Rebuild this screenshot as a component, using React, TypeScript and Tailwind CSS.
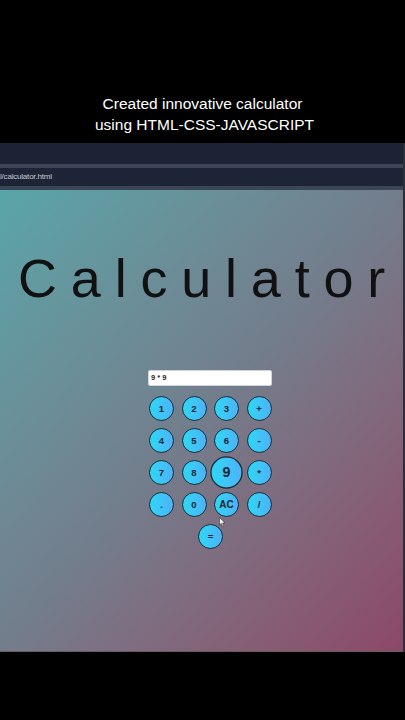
import React from 'react';

const keys = ['1', '2', '3', '+', '4', '5', '6', '-', '7', '8', '9', '*', '.', '0', 'AC', '/'];

const CalcKey: React.FC<{ label: string; hovered?: boolean }> = ({ label, hovered = false }) => {
  const base =
    "w-[25px] h-[25px] rounded-full border-[1.5px] border-[#14303d] bg-linear-to-r from-[#2bd7f5] to-[#4cb2f7] flex items-center justify-center font-bold text-[#172634] leading-none";
  const size = label === 'AC' ? 'text-[10px]' : 'text-[9.5px]';
  const hover = hovered ? 'scale-[1.3] text-[11px] z-10' : '';
  return <div className={`${base} ${size} ${hover}`}>{label}</div>;
};

export default function App() {
  return (
    <div className="w-[405px] h-[720px] bg-black flex flex-col overflow-hidden font-['Liberation_Sans',Arial,sans-serif]">
      {/* caption */}
      <div className="h-[143px] flex flex-col items-center pt-[93px] text-white text-[15.5px] leading-[21px]">
        <div>Created innovative calculator</div>
        <div className="pl-[4px]">using HTML-CSS-JAVASCRIPT</div>
      </div>

      {/* browser window */}
      <div className="flex">
        <div className="w-[403px] flex flex-col">
          <div className="h-[21px] bg-[#1b2335]" />
          <div className="h-[4px] bg-[#3c4658]" />
          <div className="h-[18px] bg-[#1c2436] flex items-center text-[8px] text-[#c3c9d3] tracking-[-0.2px]">
            l/calculator.html
          </div>
          <div className="h-[4px] bg-[#3a4556]" />

          {/* page */}
          <div className="h-[461px] bg-linear-to-br from-[#58a5a8] via-[#737d8c] to-[#8c4866] relative">
            <div className="pt-[61px] pl-[18px] text-[54px] leading-none tracking-[13.8px] text-[#111] whitespace-nowrap">
              Calculator
            </div>

            <div className="mt-[65px] ml-[148px] w-[124px] flex flex-col">
              <div className="h-[16px] bg-white rounded-[2px] border border-[#d0d4d8] flex items-center pl-[2px] text-[7.5px] font-bold text-[#222]">
                9 * 9
              </div>
              <div className="mt-[10px] ml-[1px] grid grid-cols-[repeat(4,25px)] gap-x-[7.5px] gap-y-[7px]">
                {keys.map((k) => (
                  <CalcKey key={k} label={k} hovered={k === '9'} />
                ))}
              </div>
              <div className="mt-[7px] flex justify-center pl-[1px]">
                <CalcKey label="=" />
              </div>
            </div>

            {/* mouse pointer */}
            <svg className="absolute left-[219px] top-[327px]" width="7" height="10" viewBox="0 0 7 10">
              <path d="M0.5 0.5 L0.5 8 L2.3 6.3 L3.6 9.3 L4.8 8.8 L3.6 5.9 L6 5.9 Z" fill="#fff" stroke="#333" strokeWidth="0.6" />
            </svg>
          </div>
          <div className="h-[1px] bg-[#6a5a66]" />
        </div>
        <div className="w-[2px] bg-[#2a2f3a]" />
      </div>
    </div>
  );
}
